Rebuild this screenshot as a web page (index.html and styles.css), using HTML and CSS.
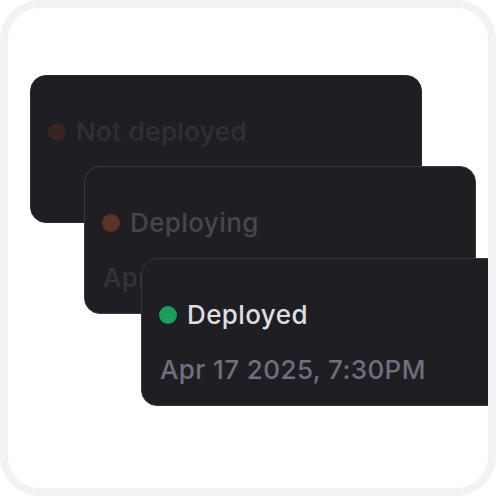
FILE: index.html
```html
<!DOCTYPE html>
<html>
<head>
<meta charset="utf-8">
<link rel="stylesheet" href="styles.css">
</head>
<body>
<div class="frame">
  <div class="card card-1">
    <div class="status"><span class="dot"></span><span class="label">Not deployed</span></div>
  </div>
  <div class="card card-2">
    <div class="status"><span class="dot"></span><span class="label">Deploying</span></div>
    <div class="date">Apr 17 2025, 7:30PM</div>
  </div>
  <div class="card card-3">
    <div class="status"><span class="dot"></span><span class="label">Deployed</span></div>
    <div class="date">Apr 17 2025, 7:30PM</div>
  </div>
</div>
</body>
</html>
```
FILE: styles.css
```css
* { box-sizing: border-box; }
html, body { margin: 0; padding: 0; background: #ffffff; }
body { width: 496px; height: 496px; font-family: Inter, "Noto Sans", sans-serif; }
.frame {
  width: 496px;
  height: 496px;
  border: 8px solid #f2f2f2;
  border-radius: 40px;
  background: #ffffff;
  overflow: hidden;
  display: flex;
  flex-direction: column;
  align-items: flex-start;
  padding-top: 67px;
}
.card {
  flex: none;
  width: 392px;
  height: 148px;
  background: #1e1e23;
  border: 1px solid #34343b;
  border-radius: 16px;
  padding: 40px 0 0 17px;
}
.card-1 { margin-left: 22px; border-color: #2a2a30; }
.card-2 { margin-left: 76px; margin-top: -57px; border-color: #3a3a40; }
.card-3 { margin-left: 133px; margin-top: -56px; border-color: #36363d; }
.status {
  display: flex;
  align-items: center;
  height: 32px;
  gap: 10px;
}
.dot {
  width: 18px;
  height: 18px;
  border-radius: 50%;
  flex: none;
}
.label, .date {
  font-size: 26px;
  line-height: 32px;
  font-weight: 500;
  letter-spacing: 0.4px;
  white-space: nowrap;
}
.date { margin-top: 23px; margin-left: 1px; }
.card-1 .dot { background: #3a2222; }
.card-1 .label { color: #2f2f35; }
.card-2 .dot { background: #5c3325; }
.card-2 .label { color: #46464d; }
.card-2 .date { color: #33333a; }
.card-3 .dot { background: #1a9e5c; }
.card-3 .label { color: #dedee2; }
.card-3 .date { color: #6f6f7f; }
```
